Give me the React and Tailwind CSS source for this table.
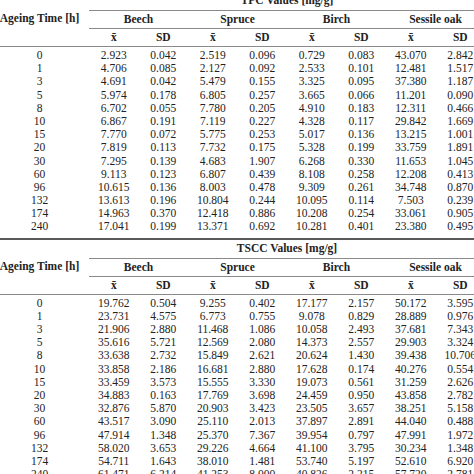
import React from 'react';

const tpc = [
  ['0', '2.923', '0.042', '2.519', '0.096', '0.729', '0.083', '43.070', '2.842'],
  ['1', '4.706', '0.085', '2.127', '0.092', '2.533', '0.101', '12.481', '1.517'],
  ['3', '4.691', '0.042', '5.479', '0.155', '3.325', '0.095', '37.380', '1.187'],
  ['5', '5.974', '0.178', '6.805', '0.257', '3.665', '0.066', '11.201', '0.090'],
  ['8', '6.702', '0.055', '7.780', '0.205', '4.910', '0.183', '12.311', '0.466'],
  ['10', '6.867', '0.191', '7.119', '0.227', '4.328', '0.117', '29.842', '1.669'],
  ['15', '7.770', '0.072', '5.775', '0.253', '5.017', '0.136', '13.215', '1.001'],
  ['20', '7.819', '0.113', '7.732', '0.175', '5.328', '0.199', '33.759', '1.891'],
  ['30', '7.295', '0.139', '4.683', '1.907', '6.268', '0.330', '11.653', '1.045'],
  ['60', '9.113', '0.123', '6.807', '0.439', '8.108', '0.258', '12.208', '0.413'],
  ['96', '10.615', '0.136', '8.003', '0.478', '9.309', '0.261', '34.748', '0.870'],
  ['132', '13.613', '0.196', '10.804', '0.244', '10.095', '0.114', '7.503', '0.239'],
  ['174', '14.963', '0.370', '12.418', '0.886', '10.208', '0.254', '33.061', '0.905'],
  ['240', '17.041', '0.199', '13.371', '0.692', '10.281', '0.401', '23.380', '0.495'],
];

const tscc = [
  ['0', '19.762', '0.504', '9.255', '0.402', '17.177', '2.157', '50.172', '3.595'],
  ['1', '23.731', '4.575', '6.773', '0.755', '9.078', '0.829', '28.889', '0.976'],
  ['3', '21.906', '2.880', '11.468', '1.086', '10.058', '2.493', '37.681', '7.343'],
  ['5', '35.616', '5.721', '12.569', '2.080', '14.373', '2.557', '29.903', '3.324'],
  ['8', '33.638', '2.732', '15.849', '2.621', '20.624', '1.430', '39.438', '10.706'],
  ['10', '33.858', '2.186', '16.681', '2.880', '17.628', '0.174', '40.276', '0.554'],
  ['15', '33.459', '3.573', '15.555', '3.330', '19.073', '0.561', '31.259', '2.626'],
  ['20', '34.883', '0.163', '17.769', '3.698', '24.459', '0.950', '43.858', '2.782'],
  ['30', '32.876', '5.870', '20.903', '3.423', '23.505', '3.657', '38.251', '5.158'],
  ['60', '43.517', '3.090', '25.110', '2.013', '37.897', '2.891', '44.040', '0.488'],
  ['96', '47.914', '1.348', '25.370', '7.367', '39.954', '0.797', '47.991', '1.972'],
  ['132', '58.020', '3.653', '29.226', '4.664', '41.100', '3.795', '30.234', '1.348'],
  ['174', '54.711', '1.643', '38.010', '1.481', '53.740', '5.197', '52.610', '6.920'],
  ['240', '61.471', '6.214', '41.253', '8.000', '40.826', '2.215', '57.720', '2.781'],
];

const species = ['Beech', 'Spruce', 'Birch', 'Sessile oak'];

const cols = 'grid grid-cols-[89px_repeat(8,49.5px)]';

const ValueTable = ({ title, rows }) => (
  <div className="border-t-2 border-[#5a5a5a]">
    <div className="flex">
      <div className="w-[89px] shrink-0 flex items-center justify-center pr-[10px] font-bold whitespace-nowrap">
        Ageing Time [h]
      </div>
      <div className="w-[396px] shrink-0 flex flex-col">
        <div className="h-[19px] flex items-center justify-center font-bold border-b border-[#8a8a8a]">
          {title}
        </div>
        <div className="h-[18px] grid grid-cols-4 font-bold border-b border-[#8a8a8a]">
          {species.map((s) => (
            <div key={s} className="flex items-center justify-center whitespace-nowrap">{s}</div>
          ))}
        </div>
        <div className="h-[17px] grid grid-cols-8 font-bold">
          {species.map((s) => (
            <React.Fragment key={s}>
              <div className="flex items-center justify-center">x̄</div>
              <div className="flex items-center justify-center">SD</div>
            </React.Fragment>
          ))}
        </div>
      </div>
    </div>
    <div className="border-t border-[#8a8a8a] pt-[2px] pb-[4px]">
      {rows.map((r) => (
        <div key={r[0]} className={`${cols} h-[13.2px] leading-[13.2px]`}>
          {r.map((v, i) => (
            <div key={i} className={`text-center whitespace-nowrap ${i === 0 ? 'pr-[10px]' : ''}`}>{v}</div>
          ))}
        </div>
      ))}
    </div>
  </div>
);

export default function App() {
  return (
    <div className="w-[474px] h-[474px] overflow-hidden bg-white text-[#222] text-[11.5px] font-['Liberation_Serif',serif]">
      <div className="-mt-[10px]">
        <ValueTable title="TPC Values [mg/g]" rows={tpc} />
        <ValueTable title="TSCC Values [mg/g]" rows={tscc} />
      </div>
    </div>
  );
}
